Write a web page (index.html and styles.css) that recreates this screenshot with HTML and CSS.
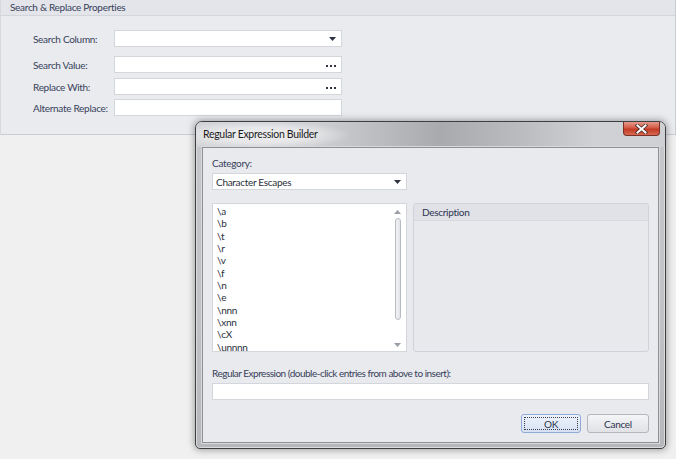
FILE: index.html
```html
<!DOCTYPE html>
<html>
<head>
<meta charset="utf-8">
<link rel="stylesheet" href="styles.css">
</head>
<body>
<div class="props">
  <div class="props-head">Search &amp; Replace Properties</div>
  <div class="props-body">
    <div class="row r1">
      <label class="lbl">Search Column:</label>
      <div class="box"><span class="fill"></span><svg class="arrow" width="7" height="4" viewBox="0 0 7 4"><path d="M0 0H7L3.5 4Z" fill="#2f3440"/></svg></div>
    </div>
    <div class="row r2">
      <label class="lbl">Search Value:</label>
      <div class="box"><span class="fill"></span><svg class="dots" width="10" height="2" viewBox="0 0 10 2"><rect x="0" y="0" width="2" height="2" fill="#2f3440"/><rect x="4" y="0" width="2" height="2" fill="#2f3440"/><rect x="8" y="0" width="2" height="2" fill="#2f3440"/></svg></div>
    </div>
    <div class="row r3">
      <label class="lbl">Replace With:</label>
      <div class="box"><span class="fill"></span><svg class="dots" width="10" height="2" viewBox="0 0 10 2"><rect x="0" y="0" width="2" height="2" fill="#2f3440"/><rect x="4" y="0" width="2" height="2" fill="#2f3440"/><rect x="8" y="0" width="2" height="2" fill="#2f3440"/></svg></div>
    </div>
    <div class="row r4">
      <label class="lbl">Alternate Replace:</label>
      <div class="box"></div>
    </div>
  </div>
</div>

<div class="dialog">
  <div class="titlebar">
    <span class="title">Regular Expression Builder</span>
    <div class="close"><svg width="13" height="10" viewBox="0 0 13 10"><path d="M2.5 1.5L10.5 8.5M10.5 1.5L2.5 8.5" stroke="#4a2a26" stroke-width="3.6" stroke-linecap="square"/><path d="M2.5 1.5L10.5 8.5M10.5 1.5L2.5 8.5" stroke="#ffffff" stroke-width="2" stroke-linecap="square"/></svg></div>
  </div>
  <div class="client">
    <div class="cap">Category:</div>
    <div class="combo"><span class="fill">Character Escapes</span><svg class="arrow" width="7" height="4" viewBox="0 0 7 4"><path d="M0 0H7L3.5 4Z" fill="#2f3440"/></svg></div>
    <div class="panes">
      <div class="list">
        <div class="items">
          <div>\a</div><div>\b</div><div>\t</div><div>\r</div><div>\v</div><div>\f</div><div>\n</div><div>\e</div><div>\nnn</div><div>\xnn</div><div>\cX</div><div>\unnnn</div>
        </div>
        <div class="vscroll">
          <svg class="sarrow" width="7" height="4" viewBox="0 0 7 4"><path d="M0 4H7L3.5 0Z" fill="#9a9ea6"/></svg>
          <div class="track"><div class="thumb"></div></div>
          <svg class="sarrow" width="7" height="4" viewBox="0 0 7 4"><path d="M0 0H7L3.5 4Z" fill="#9a9ea6"/></svg>
        </div>
      </div>
      <div class="desc">
        <div class="desc-head">Description</div>
        <div class="desc-body"></div>
      </div>
    </div>
    <div class="cap cap2">Regular Expression (double-click entries from above to insert):</div>
    <div class="textbox"></div>
    <div class="buttons">
      <div class="btn ok"><span class="focus">OK</span></div>
      <div class="btn">Cancel</div>
    </div>
  </div>
</div>
</body>
</html>
```
FILE: styles.css
```css
html, body {
  margin: 0;
  padding: 0;
}
body {
  width: 676px;
  height: 459px;
  background: #f0f0f0;
  font-family: Lato, "Open Sans", sans-serif;
  font-size: 10px;
  letter-spacing: -0.3px;
  color: #37415a;
  overflow: hidden;
  position: relative;
}
.props {
  background: #e9ebef;
  border-right: 1px solid #c9ccd2;
  border-left: 1px solid #d6d8dc;
  border-bottom: 1px solid #c9ccd2;
  height: 135px;
  box-sizing: border-box;
}
.props-head {
  height: 16px;
  line-height: 15px;
  padding-left: 9px;
  background: #e3e5ea;
  border-bottom: 1px solid #d2d5da;
  box-sizing: border-box;
}
.props-body {
  padding: 14px 0 0 32px;
}
.row {
  display: flex;
  align-items: center;
  height: 17px;
}
.r2 { margin-top: 9px; }
.r3 { margin-top: 5px; }
.r4 { margin-top: 4px; }
.lbl {
  width: 81px;
  white-space: nowrap;
}
.box {
  width: 228px;
  height: 17px;
  box-sizing: border-box;
  background: #ffffff;
  border: 1px solid #d3d6db;
  display: flex;
  align-items: center;
  padding: 0 5px 0 4px;
}
.fill {
  flex: 1;
}
.arrow {
  display: block;
}
.dots {
  display: block;
  margin-top: 2px;
}

.dialog {
  position: absolute;
  left: 195px;
  top: 121px;
  width: 471px;
  height: 328px;
  box-sizing: border-box;
  border: 1px solid #3e3f42;
  border-radius: 7px 7px 5px 5px;
  padding: 0 6px 5px;
  display: flex;
  flex-direction: column;
  background: linear-gradient(180deg, #c6c7ca 0, #c1c2c5 60%, #b6b7ba 100%);
  box-shadow: 0 0 7px 1px rgba(0,0,0,0.35), inset 0 0 0 1px #dadbdd;
}
.titlebar {
  height: 25px;
  flex: none;
  display: flex;
  align-items: flex-start;
  margin: 0 -6px;
  padding: 0 5px 0 7px;
  border-radius: 6px 6px 0 0;
  background:
    radial-gradient(ellipse 90px 14px at 65px 13px, rgba(240,240,242,0.95) 0, rgba(236,236,238,0.8) 55%, rgba(236,236,238,0) 100%),
    linear-gradient(90deg, #d3d4d7 0, #cfd0d3 25%, #a9aaad 52%, #b9babd 68%, #d0d1d4 85%, #cfd0d3 100%);
}
.title {
  font-size: 10.5px;
  color: #1b1b1b;
  margin-top: 6px;
  flex: 1;
}
.close {
  width: 37px;
  height: 14px;
  box-sizing: border-box;
  border: 1px solid #7c2f26;
  border-top: none;
  border-radius: 0 0 4px 4px;
  background: linear-gradient(180deg, #e59a8c 0, #d45a45 45%, #c23a24 55%, #d86a52 100%);
  display: flex;
  align-items: center;
  justify-content: center;
}
.close svg { display: block; }
.client {
  flex: 1;
  border: 1px solid #8e9094;
  background: #e9eaee;
  padding: 8px 9px 0;
  display: flex;
  flex-direction: column;
  box-shadow: 0 0 0 1px #d8d9db;
}
.cap {
  height: 14px;
  line-height: 14px;
}
.combo {
  margin-top: 3px;
  width: 195px;
  height: 17px;
  box-sizing: border-box;
  background: #ffffff;
  border: 1px solid #d3d6db;
  display: flex;
  align-items: center;
  padding: 0 5px 0 3px;
  color: #2a2f3a;
}
.panes {
  margin-top: 13px;
  height: 149px;
  display: flex;
  gap: 6px;
}
.list {
  width: 195px;
  box-sizing: border-box;
  background: #ffffff;
  border: 1px solid #d3d6db;
  display: flex;
  overflow: hidden;
}
.items {
  flex: 1;
  padding: 1px 0 0 4px;
  line-height: 12.35px;
  color: #2a2f3a;
}
.vscroll {
  width: 17px;
  display: flex;
  flex-direction: column;
  align-items: center;
  padding: 6px 0 4px;
  box-sizing: border-box;
}
.sarrow { display: block; flex: none; }
.track {
  flex: 1;
  width: 6px;
  padding: 4px 0 23px;
  display: flex;
}
.thumb {
  flex: 1;
  border: 1px solid #b8bbc1;
  border-radius: 3px;
  background: linear-gradient(90deg, #f2f3f5, #e2e4e8);
}
.desc {
  flex: 1;
  border: 1px solid #cfd2d8;
  border-radius: 3px;
  display: flex;
  flex-direction: column;
  background: #e8e9ed;
}
.desc-head {
  height: 16px;
  line-height: 16px;
  padding-left: 8px;
  background: #e0e2e7;
  border-bottom: 1px solid #d7d9de;
  border-radius: 3px 3px 0 0;
  color: #2c3450;
}
.desc-body { flex: 1; }
.cap2 {
  margin-top: 14px;
  letter-spacing: -0.5px;
}
.textbox {
  margin-top: 3px;
  height: 17px;
  box-sizing: border-box;
  background: #ffffff;
  border: 1px solid #d3d6db;
}
.buttons {
  margin-top: 14px;
  display: flex;
  justify-content: flex-end;
  gap: 6px;
}
.btn {
  width: 62px;
  height: 19px;
  box-sizing: border-box;
  border: 1px solid #b3b7bd;
  border-radius: 3px;
  background: linear-gradient(180deg, #f4f5f7 0, #eaebee 50%, #e0e2e6 100%);
  display: flex;
  align-items: center;
  justify-content: center;
  color: #2c3450;
}
.ok {
  width: 60px;
  border-color: #8eaad6;
  background: linear-gradient(180deg, #eef3fc 0, #e2eaf8 50%, #d6e1f4 100%);
  padding: 2px;
}
.focus {
  flex: 1;
  align-self: stretch;
  border: 1px dotted #39404c;
  display: flex;
  align-items: center;
  justify-content: center;
}
```
